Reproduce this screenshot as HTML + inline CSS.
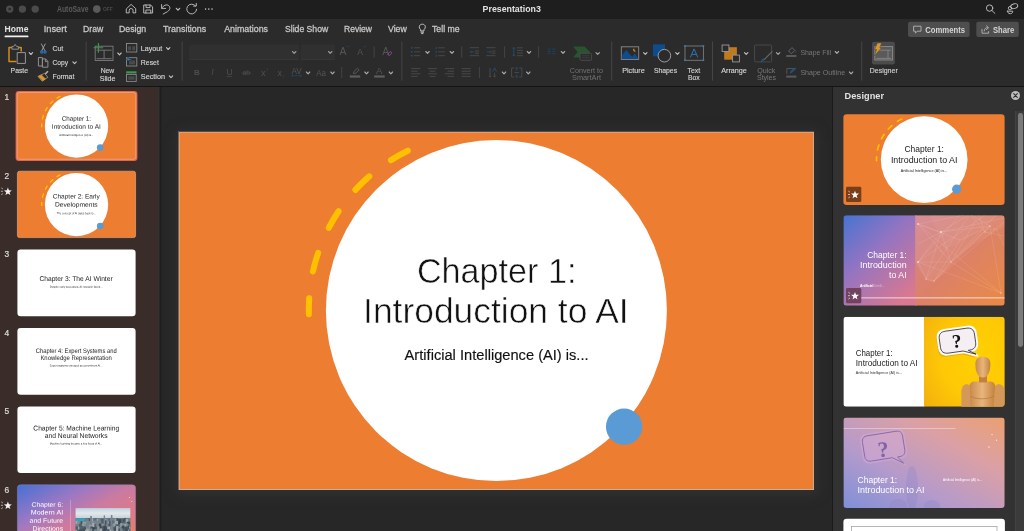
<!DOCTYPE html>
<html lang="en">
<head>
<meta charset="utf-8">
<title>Presentation3</title>
<style>
*{box-sizing:border-box;margin:0;padding:0}
html,body{width:1024px;height:531px;overflow:hidden;background:#282828}
body{position:relative;font-family:"Liberation Sans",sans-serif;color:#d6d6d6}
#titlebar{position:absolute;left:0;top:0;width:1024px;height:19px;background:#1e1e1e}
#ribbon{position:absolute;left:0;top:19px;width:1024px;height:67px;background:#2b2b2b}
#ribline{position:absolute;left:0;top:85.5px;width:1024px;height:1.7px;background:#141414}
#left{position:absolute;left:0;top:87px;width:158px;height:444px;background:#392c29;overflow:hidden}
#leftdiv{position:absolute;left:158px;top:87px;width:4px;height:444px;z-index:2;background:linear-gradient(90deg,#333 0,#333 1px,#272727 1px,#272727 2px,#1e1e1e 2px,#1e1e1e 3px,#232323 3px,#232323 4px)}
#main{position:absolute;left:160px;top:87px;width:672px;height:444px;background:#272727;overflow:hidden}
#slideshadow{position:absolute;left:19px;top:45px;width:635px;height:358px;background:#ed7d31;box-shadow:1px 2px 11px 3px rgba(58,58,58,.55)}
#designer{position:absolute;left:832px;top:87px;width:192px;height:444px;background:#323232;overflow:hidden;border-left:1px solid #1a1a1a}
svg{position:absolute;overflow:visible}
svg text{white-space:pre}
svg{will-change:transform}
.thin text{stroke:#fff;stroke-width:.55px;paint-order:fill stroke}
#dscroll{position:absolute;left:1015.3px;top:110.8px;width:8.7px;height:421px;background:#3b3b3b;border-left:1px solid #434343}
#dthumb{position:absolute;left:1018.3px;top:112.6px;width:4.8px;height:234.4px;border-radius:2.4px;background:#7b7b7b}
.tiny{stroke:#222;stroke-width:.12px}
</style>
</head>
<body>

<div id="titlebar"></div>
<svg id="titlesvg" width="1024" height="40" viewBox="0 0 1024 40" style="left:0;top:0" font-family="Liberation Sans, sans-serif">
<!-- traffic lights (inactive) -->
<circle cx="9.7" cy="9.1" r="3.7" fill="#4b4b4b"/><circle cx="9.7" cy="9.1" r="1.3" fill="#2a2a2a"/>
<circle cx="22.4" cy="9.1" r="3.7" fill="#4b4b4b"/>
<circle cx="35.2" cy="9.1" r="3.7" fill="#4b4b4b"/>
<text x="57" y="12" font-size="8.2" font-weight="bold" fill="#5c5c5c" textLength="31.5" lengthAdjust="spacingAndGlyphs">AutoSave</text>
<circle cx="96.8" cy="9.1" r="3.8" fill="#5a5a5a"/>
<text x="103" y="11.2" font-size="5.6" font-weight="bold" fill="#4a4a4a" textLength="9.8" lengthAdjust="spacingAndGlyphs">OFF</text>
<g fill="none" stroke="#bdbdbd" stroke-width=".95" stroke-linecap="round" stroke-linejoin="round">
<!-- home -->
<path d="M126.6 8.6 L131.1 4.4 L135.7 8.6 V12.9 H133 V10.4 a1.9 1.9 0 0 0 -3.8 0 V12.9 H126.6 Z"/>
<!-- save -->
<path d="M144.1 5 H150.6 L152.6 7 V13 H144.1 Z M146 5 V7.6 H150 V5 M145.9 13 V10 H150.8 V13"/>
<!-- undo -->
<path d="M161.6 4.6 V8.4 H165.6 M161.9 8.2 C163.4 5.2 166.6 4 168.6 5.6 C170.6 7.3 170.2 9.8 167.6 11.6 L163.2 14"/>
<path d="M176.3 8.3 L178 10.1 L179.7 8.3" stroke-width="1.2"/>
<!-- redo -->
<path d="M195.4 5.8 A4.9 4.9 0 1 0 196.6 9.2 M193.6 6.1 H196.3 V3.4"/>
</g>
<g fill="#bdbdbd"><circle cx="205.6" cy="9.1" r=".8"/><circle cx="208.8" cy="9.1" r=".8"/><circle cx="212" cy="9.1" r=".8"/></g>
<text x="482.6" y="11.9" font-size="9.6" font-weight="bold" fill="#e2e2e2" textLength="58.2" lengthAdjust="spacingAndGlyphs">Presentation3</text>
<g fill="none" stroke="#bdbdbd" stroke-width=".95" stroke-linecap="round">
<circle cx="989.6" cy="8.1" r="3.2"/><path d="M992 10.6 L994.9 13.4"/>
<!-- coauthor -->
<ellipse cx="1014.2" cy="6.2" rx="3.6" ry="2.3" transform="rotate(-18 1014.2 6.2)"/>
<circle cx="1010" cy="8.2" r="1.7"/>
<path d="M1007.4 11.2 H1012.8 C1012.8 14.6 1007.4 14.6 1007.4 11.2 Z"/>
</g>
</svg>

<div id="ribbon"></div><div id="ribline"></div>
<svg id="tabsvg" width="1024" height="40" viewBox="0 0 1024 40" style="left:0;top:0" font-family="Liberation Sans, sans-serif" font-size="9.2" fill="#c8c8c8">
<g stroke="#c8c8c8" stroke-width=".28">
<text x="4.6" y="31.8" fill="#e2e2e2" stroke="none" font-weight="bold" textLength="23.8" lengthAdjust="spacingAndGlyphs">Home</text>
<text x="43.8" y="31.8" textLength="23" lengthAdjust="spacingAndGlyphs">Insert</text>
<text x="83" y="31.8" textLength="20.2" lengthAdjust="spacingAndGlyphs">Draw</text>
<text x="119" y="31.8" textLength="27.2" lengthAdjust="spacingAndGlyphs">Design</text>
<text x="163" y="31.8" textLength="43.2" lengthAdjust="spacingAndGlyphs">Transitions</text>
<text x="224.2" y="31.8" textLength="43.8" lengthAdjust="spacingAndGlyphs">Animations</text>
<text x="285" y="31.8" textLength="43.2" lengthAdjust="spacingAndGlyphs">Slide Show</text>
<text x="344" y="31.8" textLength="28" lengthAdjust="spacingAndGlyphs">Review</text>
<text x="388" y="31.8" textLength="18.8" lengthAdjust="spacingAndGlyphs">View</text>
<text x="432" y="31.8" textLength="27.6" lengthAdjust="spacingAndGlyphs">Tell me</text>
</g>
<rect x="4.5" y="35.5" width="24" height="1.8" rx=".9" fill="#efefef"/>
<!-- bulb -->
<g fill="none" stroke="#c6c6c6" stroke-width="1" stroke-linecap="round">
<path d="M420.6 30.6 V29.6 C418.4 27.8 419 24.2 422.3 24.2 C425.6 24.2 426.2 27.8 424 29.6 V30.6 Z M421 32.2 H423.6 M421.6 33.6 H423"/>
</g>
<!-- comments / share buttons -->
<rect x="908" y="21.8" width="61.6" height="15.2" rx="2" fill="#4e4e4e"/>
<rect x="976.3" y="21.8" width="42.5" height="15.2" rx="2" fill="#4e4e4e"/>
<g fill="none" stroke="#b4b4b4" stroke-width=".9" stroke-linejoin="round" stroke-linecap="round">
<path d="M914 26.2 H921 V31.2 H917.2 L915.4 33.2 V31.2 H914 Z"/>
<path d="M982 29.4 V33.2 H988.6 V31.6 M984.2 31 C984.4 28.6 985.8 27.6 987.4 27.6 M986.4 25.8 L988.6 27.7 L986.4 29.6"/>
</g>
<g fill="#d6d6d6" font-weight="bold" font-size="8.8">
<text x="925.2" y="32.6" textLength="39.8" lengthAdjust="spacingAndGlyphs">Comments</text>
<text x="993" y="32.6" textLength="21.2" lengthAdjust="spacingAndGlyphs">Share</text>
</g>
</svg>
<svg id="ribsvg" width="1024" height="90" viewBox="0 0 1024 90" style="left:0;top:0" font-family="Liberation Sans, sans-serif" font-size="8">
<defs>
<path id="chev" d="M-1.7 -.9 L0 .9 L1.7 -.9" fill="none" stroke-width="1.1" stroke-linecap="round" stroke-linejoin="round"/>
</defs>
<!-- group separators -->
<g fill="#454545">
<rect x="85.6" y="41.4" width="1" height="39.2"/><rect x="181.6" y="41.4" width="1" height="39.2"/>
<rect x="401.4" y="41.4" width="1" height="39.2"/><rect x="611.2" y="41.4" width="1" height="39.2"/>
<rect x="712" y="41.4" width="1" height="39.2"/><rect x="861.2" y="41.4" width="1" height="39.2"/>
</g>
<g fill="#444">
<rect x="373.6" y="46.4" width="1" height="11.2"/><rect x="341.2" y="67" width="1" height="11"/>
<rect x="461.2" y="46.4" width="1" height="11.2"/><rect x="504.1" y="46.4" width="1" height="11.2"/>
<rect x="538.1" y="46.4" width="1" height="11.2"/><rect x="478.9" y="67" width="1" height="11"/>
</g>

<!-- ===== Clipboard ===== -->
<g fill="none" stroke-linejoin="round">
<path d="M12 47.6 H9 V61.6 H16.4 M18.4 47.6 H21.2 V51.6" stroke="#d48a1c" stroke-width="1.5"/>
<path d="M11.9 49.2 V46.6 H13.6 L15.1 44.4 L16.7 46.6 H18.4 V49.2 Z" stroke="#9a9a9a" stroke-width=".9" fill="#2b2b2b"/>
<rect x="17.2" y="52.6" width="8.2" height="10.8" fill="#2b2b2b" stroke="#a2a2a2" stroke-width=".9"/>
</g>
<use href="#chev" x="30.9" y="53.6" stroke="#c4c4c4"/>
<!-- scissors -->
<g fill="none" stroke="#a8a8a8" stroke-width=".9" stroke-linecap="round">
<path d="M41.4 44 L44.8 50.6 M45.2 44 L41.8 50.6"/>
<circle cx="41.7" cy="52" r="1.1" stroke="#2a74b8" stroke-width="1.2"/><circle cx="45" cy="52" r="1.1" stroke="#2a74b8" stroke-width="1.2"/>
</g>
<!-- copy -->
<g fill="#2b2b2b" stroke="#9c9c9c" stroke-width=".9" stroke-linejoin="round">
<path d="M38.4 57.6 H42.4 V66 H38.4 Z"/>
<path d="M42.4 58.9 H45.6 L47.9 61.4 V67.2 H42.4 Z"/><path d="M45.4 59.2 V61.6 H47.6" fill="none"/>
</g>
<use href="#chev" x="74.6" y="62.8" stroke="#c4c4c4"/>
<!-- format painter -->
<g stroke-linejoin="round" stroke-linecap="round">
<path d="M38.5 76.3 L44.5 73.3 L47.9 77.2 L42.7 80.8 Z" fill="#2b2b2b" stroke="#a89a84" stroke-width=".8"/>
<path d="M38.5 76.3 L41.4 74.9 L45.4 79 L42.7 80.8 Z" fill="#d9962f" stroke="#dda040" stroke-width=".6"/>
<path d="M45.6 73.6 L47.6 71.6" fill="none" stroke="#a8a8a8" stroke-width="1.5"/>
</g>
<g fill="#d4d4d4" stroke="#d4d4d4" stroke-width=".15">
<text x="10.6" y="72.8" textLength="17.4" lengthAdjust="spacingAndGlyphs">Paste</text>
<text x="52.4" y="50.9" textLength="10.8" lengthAdjust="spacingAndGlyphs">Cut</text>
<text x="52.4" y="64.9" textLength="15.6" lengthAdjust="spacingAndGlyphs">Copy</text>
<text x="52.4" y="78.8" textLength="22" lengthAdjust="spacingAndGlyphs">Format</text>
</g>

<!-- ===== Slides ===== -->
<g fill="none" stroke="#7c7c7c" stroke-width=".9">
<rect x="95.2" y="46.2" width="17.8" height="14.3"/>
<path d="M96.6 50.2 H111.6 M104.1 50.2 V58.6 M96.6 58.7 H111.6"/>
</g>
<path d="M93.6 47.7 H103.2 M98.4 42.9 V52.8" stroke="#3a9a4c" stroke-width="1.1" fill="none"/>
<use href="#chev" x="119.5" y="53.9" stroke="#c4c4c4"/>
<!-- layout -->
<rect x="126.5" y="43.5" width="10.3" height="8.5" fill="none" stroke="#8a8a8a" stroke-width=".9"/>
<rect x="128.1" y="46.3" width="3" height="4" fill="#4a4a4a"/><rect x="132.2" y="46.3" width="3" height="4" fill="#4a4a4a"/>
<use href="#chev" x="168.2" y="48.6" stroke="#c4c4c4"/>
<!-- reset -->
<rect x="126.5" y="57.7" width="10.3" height="8.3" fill="none" stroke="#8a8a8a" stroke-width=".9"/>
<rect x="129" y="60.4" width="6" height="4" fill="#4a4a4a"/>
<path d="M126.4 59.4 L128.2 57 L128.8 58.6 C130.6 58.4 131.8 59.6 131.8 61.6 C131 60.2 130 59.9 129.2 60 L129.6 61.4 Z" fill="#2f7fc4" stroke="#2b2b2b" stroke-width=".5"/>
<!-- section -->
<rect x="126.2" y="71.3" width="10.3" height="2.1" fill="#3a9a4c"/>
<rect x="126.5" y="74.4" width="9.7" height="7" fill="none" stroke="#8a8a8a" stroke-width=".9"/>
<rect x="128.2" y="76.2" width="6.3" height="3.6" fill="#4a4a4a"/>
<use href="#chev" x="171" y="76.7" stroke="#c4c4c4"/>
<g fill="#d4d4d4" stroke="#d4d4d4" stroke-width=".15">
<text x="100.7" y="72.8" textLength="13.6" lengthAdjust="spacingAndGlyphs">New</text>
<text x="99.7" y="80.5" textLength="15.8" lengthAdjust="spacingAndGlyphs">Slide</text>
<text x="140.8" y="50.9" textLength="21.4" lengthAdjust="spacingAndGlyphs">Layout</text>
<text x="140.8" y="64.9" textLength="18.1" lengthAdjust="spacingAndGlyphs">Reset</text>
<text x="140.8" y="79" textLength="24.2" lengthAdjust="spacingAndGlyphs">Section</text>
</g>

<!-- ===== Font (disabled) ===== -->
<rect x="188.9" y="44.6" width="110" height="15.3" rx="1.5" fill="#303030"/><rect x="189.5" y="59.2" width="108.8" height=".7" fill="#3a3a3a"/>
<rect x="300.4" y="44.6" width="34.8" height="15.3" rx="1.5" fill="#303030"/><rect x="301" y="59.2" width="33.6" height=".7" fill="#3a3a3a"/>
<use href="#chev" x="294.2" y="52.4" stroke="#9a9a9a"/><use href="#chev" x="330.2" y="52.4" stroke="#9a9a9a"/>
<g fill="#555">
<text x="339.6" y="55" font-size="10.4">A</text><text x="357.2" y="55" font-size="8.6">A</text>
<text x="382.2" y="55" font-size="10.4">A</text>
<text x="194" y="75.1" font-size="8" font-weight="bold" fill="#4e4e4e">B</text>
<text x="211.2" y="75.1" font-size="8.6" font-style="italic" fill="#4e4e4e">I</text>
<text x="226.6" y="75.1" font-size="8.6" fill="#4e4e4e">U</text>
<text x="242.4" y="75.1" font-size="6.8" fill="#4e4e4e">ab</text>
<text x="261.2" y="75.6" font-size="8.6" fill="#505050">x</text>
<text x="277.5" y="75.6" font-size="8.6" fill="#505050">x</text>
<text x="291.4" y="73.6" font-size="8.6" textLength="10.2" lengthAdjust="spacingAndGlyphs">AV</text>
<text x="316.2" y="75.6" font-size="8.4" textLength="9.8" lengthAdjust="spacingAndGlyphs">Aa</text>
<text x="376.1" y="74.4" font-size="9.6">A</text>
</g>
<text x="265.8" y="70.6" font-size="4" fill="#1f4a70">2</text><text x="282.4" y="77.6" font-size="4" fill="#1f4a70">2</text>
<path d="M347.2 47 L348.4 45.8 L349.6 47 M363.4 46 L364.6 47.2 L365.8 46" fill="none" stroke="#1f4a70" stroke-width=".8"/>
<path d="M387.6 54.4 L390.2 51.4 L391.9 52.8 L389.3 55.8 Z" fill="none" stroke="#8a4a92" stroke-width=".9"/>
<path d="M226.7 76.6 H232 M241.6 73 H251" stroke="#4e4e4e" stroke-width=".7"/>
<path d="M291.6 75.7 H301.4 M293 74.6 L291.6 75.7 L293 76.8 M300 74.6 L301.4 75.7 L300 76.8" fill="none" stroke="#1f4a70" stroke-width=".7"/>
<use href="#chev" x="308.1" y="72.9" stroke="#aaa"/><use href="#chev" x="332.5" y="72.9" stroke="#aaa"/>
<!-- highlighter + font colour -->
<path d="M353.4 73.6 L354 71.4 L357.4 68.2 L359.2 69.8 L355.8 73.2 Z" fill="none" stroke="#5c5c5c" stroke-width=".9" stroke-linejoin="round"/>
<rect x="349.8" y="75.4" width="10.4" height="2.2" fill="#5e5e5e"/>
<rect x="374.2" y="75.4" width="10.5" height="2.2" fill="#5e5e5e"/>
<use href="#chev" x="366.5" y="72.9" stroke="#aaa"/><use href="#chev" x="390.9" y="72.9" stroke="#aaa"/>

<!-- ===== Paragraph (disabled) ===== -->
<g fill="#23527c"><circle cx="411.7" cy="47.8" r=".85"/><circle cx="411.7" cy="51.8" r=".85"/><circle cx="411.7" cy="55.7" r=".85"/>
<rect x="435.7" y="46.8" width=".9" height="2.2"/><rect x="435.7" y="50.7" width=".9" height="2.2"/><rect x="435.7" y="54.6" width=".9" height="2.2"/></g>
<g stroke="#4c4c4c" stroke-width=".9" fill="none">
<path d="M414 47.8 H420.3 M414 51.8 H420.3 M414 55.7 H420.3"/>
<path d="M438.2 47.8 H444.8 M438.2 51.8 H444.8 M438.2 55.7 H444.8"/>
<path d="M469.8 47.7 H479 M475 51 H479 M475 53.2 H479 M469.8 55.7 H479"/>
<path d="M486.3 47.7 H495.5 M491.5 51 H495.5 M491.5 53.2 H495.5 M486.3 55.7 H495.5"/>
<path d="M516.9 47.8 H522.9 M516.9 50.4 H522.9 M516.9 53 H522.9 M516.9 55.7 H522.9"/>
<path d="M411.2 68.6 H420.3 M411.2 71.2 H417.6 M411.2 73.8 H420.3 M411.2 76.4 H417.6"/>
<path d="M428 68.6 H437 M429.6 71.2 H435.4 M428 73.8 H437 M429.6 76.4 H435.4"/>
<path d="M444.8 68.6 H454 M447.6 71.2 H454 M444.8 73.8 H454 M447.6 76.4 H454"/>
<path d="M461.6 68.6 H470.7 M461.6 71.2 H470.7 M461.6 73.8 H470.7 M461.6 76.4 H470.7"/>
<path d="M490 67.8 V77 M488.9 75.8 L490 77.2 L491.1 75.8 M494.6 72.6 V77 M493.5 75.8 L494.6 77.2 L495.7 75.8"/>
<path d="M514.2 68 H511.6 V77 H514.2 M519.2 68 H521.8 V77 H519.2 M514.6 72.5 H518.8"/>
</g>
<g stroke="#23527c" stroke-width=".8" fill="none">
<path d="M470.4 52 H474 M471.6 50.8 L470.4 52 L471.6 53.2"/>
<path d="M487 52 H490.6 M489.4 50.8 L490.6 52 L489.4 53.2"/>
<path d="M513.8 47.6 V56 M512.6 48.8 L513.8 47.4 L515 48.8 M512.6 54.8 L513.8 56.2 L515 54.8"/>
<path d="M492.8 71.6 L494.6 67.8 L496.4 71.6"/>
<path d="M516.7 67.4 V70.6 M515.6 68.6 L516.7 67.3 L517.8 68.6 M516.7 74.4 V77.6 M515.6 76.4 L516.7 77.7 L517.8 76.4"/>
</g>
<g fill="#1f3f60"><rect x="547.6" y="48.7" width="3.2" height="1"/><rect x="547.6" y="51" width="3.2" height="1"/><rect x="547.6" y="53.3" width="3.2" height="1"/>
<rect x="552.3" y="48.7" width="3.2" height="1"/><rect x="552.3" y="51" width="3.2" height="1"/><rect x="552.3" y="53.3" width="3.2" height="1"/></g>
<use href="#chev" x="427.5" y="52.4" stroke="#aaa"/><use href="#chev" x="451.9" y="52.4" stroke="#aaa"/>
<use href="#chev" x="529" y="52.4" stroke="#aaa"/><use href="#chev" x="563" y="52.4" stroke="#aaa"/>
<use href="#chev" x="504" y="72.9" stroke="#aaa"/><use href="#chev" x="528.3" y="72.9" stroke="#aaa"/>
<!-- smartart -->
<path d="M573 46.4 H584.6 L590 52 L584.6 57.6 H573 L577.6 52 Z" fill="#28552f"/>
<rect x="580" y="53.3" width="11.6" height="7" rx="1" fill="#2b2b2b" stroke="#4e4e4e" stroke-width=".9"/>
<path d="M582 55.8 H589.6 M582 57.8 H589.6" stroke="#444" stroke-width=".7"/>
<use href="#chev" x="597.7" y="53.5" stroke="#aaa"/>
<g fill="#727272">
<text x="569.8" y="72.8" textLength="33.2" lengthAdjust="spacingAndGlyphs">Convert to</text>
<text x="572" y="80.4" textLength="29" lengthAdjust="spacingAndGlyphs">SmartArt</text>
</g>

<!-- ===== Insert ===== -->
<rect x="621.3" y="46.8" width="17.4" height="12.6" fill="#2b2b2b" stroke="#8c8c8c" stroke-width=".9"/>
<path d="M621.8 55.6 L626.3 50 L632.2 57 L634.6 53.6 L638.2 58 V58.9 H621.8 Z" fill="#0f4c8c"/>
<path d="M634.4 48.4 A1.6 1.6 0 1 0 636 51 A1.9 1.9 0 0 1 634.4 48.4 Z" fill="#d48a1c"/>
<use href="#chev" x="645.3" y="53.5" stroke="#c4c4c4"/>
<rect x="653" y="44.3" width="12" height="12" fill="#0f4c8c"/>
<circle cx="664.4" cy="55.7" r="6.3" fill="#2b2b2b" stroke="#a8a8a8" stroke-width=".9"/>
<use href="#chev" x="677.4" y="53.5" stroke="#c4c4c4"/>
<rect x="685" y="46" width="18.4" height="14.3" fill="none" stroke="#7c7c7c" stroke-width=".9"/>
<g fill="#2f7fc4"><rect x="684.1" y="45.1" width="1.7" height="1.7"/><rect x="702.5" y="45.1" width="1.7" height="1.7"/><rect x="684.1" y="59.4" width="1.7" height="1.7"/><rect x="702.5" y="59.4" width="1.7" height="1.7"/></g>
<path d="M690.4 57.4 L694.1 48.9 L697.8 57.4 M691.8 54.4 H696.4" fill="none" stroke="#2f74b8" stroke-width="1"/>
<g fill="#d4d4d4" stroke="#d4d4d4" stroke-width=".15">
<text x="622.2" y="72.8" textLength="22.5" lengthAdjust="spacingAndGlyphs">Picture</text>
<text x="653.9" y="72.8" textLength="23.2" lengthAdjust="spacingAndGlyphs">Shapes</text>
<text x="687.5" y="72.8" textLength="12.7" lengthAdjust="spacingAndGlyphs">Text</text>
<text x="687.9" y="80.4" textLength="11.8" lengthAdjust="spacingAndGlyphs">Box</text>
</g>

<!-- ===== Drawing ===== -->
<rect x="724.2" y="47.2" width="12.7" height="12.5" fill="#bf7a1c"/>
<rect x="722.1" y="45" width="6.8" height="6.5" fill="#2b2b2b" stroke="#9a9a9a" stroke-width=".9"/>
<rect x="732.6" y="55.1" width="6.8" height="6.8" fill="#2b2b2b" stroke="#9a9a9a" stroke-width=".9"/>
<use href="#chev" x="746.2" y="53.5" stroke="#c4c4c4"/>
<rect x="754.6" y="45" width="17" height="16.9" rx="1" fill="none" stroke="#4c4c4c" stroke-width=".9"/>
<path d="M772.4 51.4 L763.6 60.2" stroke="#6a6a6a" stroke-width="1.1" fill="none"/>
<path d="M764.4 59 C763.6 61.6 761.8 62.6 759.6 62.4 C761.2 61.4 761.4 59.6 762.8 58.2 Z" fill="#23527c"/>
<use href="#chev" x="778.1" y="53.5" stroke="#aaa"/>
<!-- shape fill / outline -->
<rect x="786.2" y="55" width="10.2" height="2" fill="#5a5a5a"/>
<path d="M788.6 51 L792 47.6 L794.8 50.4 L791.4 53.8 Z" fill="none" stroke="#6a6a6a" stroke-width=".9" stroke-linejoin="round"/>
<path d="M795.4 50.4 C796.2 51.6 796.4 52.4 795.6 52.8" stroke="#23527c" stroke-width=".9" fill="none"/>
<rect x="786.2" y="75.6" width="10.2" height="2" fill="#5a5a5a"/>
<path d="M796 68.6 H786.8 V74" fill="none" stroke="#5a5a5a" stroke-width=".9"/>
<path d="M789.6 73.6 L790.2 71.6 L794.4 67.6 L795.9 69 L791.6 73.1 Z" fill="#23527c"/>
<use href="#chev" x="836.9" y="52.4" stroke="#aaa"/><use href="#chev" x="851.1" y="72.9" stroke="#aaa"/>
<g fill="#d4d4d4" stroke="#d4d4d4" stroke-width=".15">
<text x="721.2" y="72.8" textLength="25.6" lengthAdjust="spacingAndGlyphs">Arrange</text>
</g>
<g fill="#787878">
<text x="757.2" y="72.8" textLength="18.2" lengthAdjust="spacingAndGlyphs">Quick</text>
<text x="757" y="80.4" textLength="19" lengthAdjust="spacingAndGlyphs">Styles</text>
<text x="800.4" y="54.7" textLength="30.8" lengthAdjust="spacingAndGlyphs">Shape Fill</text>
<text x="800.4" y="75.1" textLength="44.7" lengthAdjust="spacingAndGlyphs">Shape Outline</text>
</g>

<!-- ===== Designer ===== -->
<rect x="872" y="41.7" width="22.9" height="22.9" rx="2" fill="#4b4b4b"/>
<rect x="874.8" y="46.6" width="17.8" height="13.4" fill="#5a5a5a" stroke="#8c8c8c" stroke-width=".9"/>
<path d="M876.4 50.2 H891 M888 50.2 V58.4 M876.4 58.4 H891" stroke="#8c8c8c" stroke-width=".8" fill="none"/>
<path d="M877.4 43 H881.6 L879.8 47.6 H881.6 L874.4 56 L876.6 49.6 H874.6 Z" fill="#dc972c" stroke="#4b4b4b" stroke-width=".5"/>
<g fill="#d4d4d4" stroke="#d4d4d4" stroke-width=".15">
<text x="869.8" y="72.8" textLength="27.9" lengthAdjust="spacingAndGlyphs">Designer</text>
</g>
</svg>

<div id="left"></div><div id="leftdiv"></div>
<svg id="leftsvg" width="160" height="531" viewBox="0 0 160 531" style="left:0;top:0" font-family="Liberation Sans, sans-serif">
<defs><clipPath id="lclip"><rect x="0" y="87" width="157.5" height="444"/></clipPath><linearGradient id="g6" x1="0" y1="0" x2="1" y2="1"><stop offset="0" stop-color="#4570d6"/><stop offset=".3" stop-color="#9a78c4"/><stop offset=".5" stop-color="#cc7aa0"/><stop offset=".75" stop-color="#e27a80"/><stop offset="1" stop-color="#f58440"/></linearGradient><linearGradient id="sky" x1="0" y1="0" x2="0" y2="1"><stop offset="0" stop-color="#bcd2e2"/><stop offset=".5" stop-color="#e3e8ea"/><stop offset="1" stop-color="#c4d2d8"/></linearGradient></defs>
<g clip-path="url(#lclip)">
<text x="4.4" y="100.2" font-size="8.4" fill="#dadada" stroke="#dadada" stroke-width=".22">1</text>
<text x="4.4" y="178.79999999999998" font-size="8.4" fill="#dadada" stroke="#dadada" stroke-width=".22">2</text>
<text x="4.4" y="257.2" font-size="8.4" fill="#dadada" stroke="#dadada" stroke-width=".22">3</text>
<text x="4.4" y="335.8" font-size="8.4" fill="#dadada" stroke="#dadada" stroke-width=".22">4</text>
<text x="4.4" y="414.2" font-size="8.4" fill="#dadada" stroke="#dadada" stroke-width=".22">5</text>
<text x="4.4" y="492.8" font-size="8.4" fill="#dadada" stroke="#dadada" stroke-width=".22">6</text>
<polygon points="7.90,187.50 8.93,190.28 11.89,190.40 9.56,192.24 10.37,195.10 7.90,193.45 5.43,195.10 6.24,192.24 3.91,190.40 6.87,190.28" fill="#f2f2f2"/><g stroke="#f2f2f2" stroke-width=".8" stroke-linecap="round" opacity=".8" fill="none"><path d="M1.60 188.10 L2.60 188.80 M1.30 191.30 L2.50 191.30 M1.60 194.50 L2.60 193.80"/></g>
<polygon points="7.90,501.50 8.93,504.28 11.89,504.40 9.56,506.24 10.37,509.10 7.90,507.45 5.43,509.10 6.24,506.24 3.91,504.40 6.87,504.28" fill="#f2f2f2"/><g stroke="#f2f2f2" stroke-width=".8" stroke-linecap="round" opacity=".8" fill="none"><path d="M1.60 502.10 L2.60 502.80 M1.30 505.30 L2.50 505.30 M1.60 508.50 L2.60 507.80"/></g>
<rect x="15.6" y="90.9" width="121.8" height="70" rx="3.2" fill="#e2674f"/>
<rect x="17.2" y="92.5" width="118.6" height="66.8" rx="2" fill="#ed7d31" stroke="#f4b89a" stroke-width=".6"/>
<g transform="translate(17.5,92.8) scale(0.18553)">
<circle cx="318.15" cy="179.2" r="170.7" fill="#fff"/>
<path d="M229.42 19.13 A176.8 176.8 0 0 0 130.47 182.84" fill="none" stroke="#ffc000" stroke-width="7.2" stroke-linecap="round" stroke-dasharray="19.3 27.2"/>
<circle cx="446" cy="295.4" r="18.2" fill="#5b9bd5"/>
</g>
<g class="tt" transform="rotate(0.03)">
<text x="76.4" y="120.8" font-size="6.4" fill="#222" text-anchor="middle" textLength="29.2" lengthAdjust="spacingAndGlyphs">Chapter 1:</text>
<text x="76.4" y="128.7" font-size="6.4" fill="#222" text-anchor="middle" textLength="49" lengthAdjust="spacingAndGlyphs">Introduction to AI</text>
<text x="76.4" y="135.9" font-size="2.8" fill="#222" text-anchor="middle" textLength="34" lengthAdjust="spacingAndGlyphs">Artificial Intelligence (AI) is...</text>
</g>
<rect x="17.4" y="171.2" width="118.2" height="66.4" rx="2.2" fill="#ed7d31" stroke="#e9b694" stroke-width=".6"/>
<g transform="translate(17.5,171.3) scale(0.18553)">
<circle cx="318.15" cy="179.2" r="170.7" fill="#fff"/>
<path d="M229.42 19.13 A176.8 176.8 0 0 0 130.47 182.84" fill="none" stroke="#ffc000" stroke-width="7.2" stroke-linecap="round" stroke-dasharray="19.3 27.2"/>
<circle cx="446" cy="295.4" r="18.2" fill="#5b9bd5"/>
</g>
<g class="tt" transform="rotate(0.03)">
<text x="76.4" y="198.5" font-size="6.4" fill="#222" text-anchor="middle" textLength="47" lengthAdjust="spacingAndGlyphs">Chapter 2: Early</text>
<text x="76.4" y="206.6" font-size="6.4" fill="#222" text-anchor="middle" textLength="42.6" lengthAdjust="spacingAndGlyphs">Developments</text>
<text x="76.4" y="214.1" font-size="2.8" fill="#222" text-anchor="middle" textLength="39" lengthAdjust="spacingAndGlyphs">The concept of AI dates back to...</text>
</g>
<rect x="17.4" y="249.6" width="118.2" height="66.6" rx="3.3" fill="#fff"/>
<rect x="17.4" y="328.1" width="118.2" height="66.6" rx="3.3" fill="#fff"/>
<rect x="17.4" y="406.4" width="118.2" height="66.6" rx="3.3" fill="#fff"/>
<g class="tt" transform="rotate(0.03)">
<text x="76.2" y="280.9" font-size="7" fill="#222" text-anchor="middle" textLength="73.2" lengthAdjust="spacingAndGlyphs">Chapter 3: The AI Winter</text>
<text x="76.3" y="287.8" font-size="2.8" fill="#222" text-anchor="middle" textLength="52.6" lengthAdjust="spacingAndGlyphs">Despite early successes, AI research faced...</text>
<text x="76.4" y="352.6" font-size="6.6" fill="#222" text-anchor="middle" textLength="80.8" lengthAdjust="spacingAndGlyphs">Chapter 4: Expert Systems and</text>
<text x="76.3" y="360" font-size="6.6" fill="#222" text-anchor="middle" textLength="71.4" lengthAdjust="spacingAndGlyphs">Knowledge Representation</text>
<text x="76.3" y="366.4" font-size="2.8" fill="#222" text-anchor="middle" textLength="52.6" lengthAdjust="spacingAndGlyphs">Expert systems emerged as a prominent AI...</text>
<text x="76.5" y="430.4" font-size="7" fill="#222" text-anchor="middle" textLength="85.8" lengthAdjust="spacingAndGlyphs">Chapter 5: Machine Learning</text>
<text x="76.4" y="438" font-size="7" fill="#222" text-anchor="middle" textLength="62.8" lengthAdjust="spacingAndGlyphs">and Neural Networks</text>
<text x="76.3" y="444.4" font-size="2.8" fill="#222" text-anchor="middle" textLength="52.6" lengthAdjust="spacingAndGlyphs">Machine learning became a key focus of AI...</text>
</g>
<rect x="17.4" y="484.8" width="118.2" height="66.6" rx="3.3" fill="url(#g6)" stroke="#8f86b8" stroke-width=".5"/>
<rect x="70.4" y="500" width=".5" height="40" fill="#e8c8d8" opacity=".8"/>
<rect x="75.6" y="508.1" width="54.7" height="10.2" fill="url(#sky)"/>
<rect x="75.6" y="518" width="54.7" height="16" fill="#667682"/>
<path d="M75.6 518.2 H86 L84 521 L80 521.4 L75.6 523 Z" fill="#3f9fb6"/>
<rect x="87.5" y="518.6" width="3.1" height="5.5" fill="#44525d"/><rect x="90.6" y="519.0" width="1.4" height="3.3" fill="#909ba0"/><rect x="92.0" y="518.3" width="1.4" height="5.1" fill="#a2aaad"/><rect x="93.4" y="518.4" width="1.9" height="4.4" fill="#5e6e79"/><rect x="95.3" y="518.3" width="1.4" height="4.3" fill="#5e6e79"/><rect x="96.7" y="518.8" width="1.4" height="4.9" fill="#a2aaad"/><rect x="98.1" y="518.2" width="2.5" height="3.3" fill="#76848c"/><rect x="100.6" y="519.0" width="2.5" height="4.1" fill="#52606b"/><rect x="103.1" y="518.4" width="1.4" height="3.7" fill="#52606b"/><rect x="104.5" y="518.8" width="3.1" height="4.2" fill="#909ba0"/><rect x="107.6" y="518.1" width="2.5" height="4.0" fill="#5e6e79"/><rect x="110.1" y="517.8" width="3.1" height="5.0" fill="#76848c"/><rect x="113.2" y="518.9" width="1.4" height="3.2" fill="#838e95"/><rect x="114.6" y="518.3" width="1.9" height="4.8" fill="#909ba0"/><rect x="116.5" y="518.3" width="1.9" height="5.6" fill="#44525d"/><rect x="118.4" y="519.2" width="3.1" height="3.5" fill="#3c4852"/><rect x="121.5" y="519.2" width="1.4" height="3.8" fill="#5e6e79"/><rect x="122.9" y="519.2" width="1.4" height="3.7" fill="#3c4852"/><rect x="124.3" y="517.9" width="1.4" height="3.3" fill="#44525d"/><rect x="125.7" y="518.9" width="2.5" height="3.2" fill="#a2aaad"/><rect x="128.2" y="517.9" width="2.1" height="3.4" fill="#76848c"/><rect x="75.6" y="520.9" width="1.9" height="3.2" fill="#a2aaad"/><rect x="77.5" y="521.6" width="3.1" height="3.5" fill="#838e95"/><rect x="80.6" y="521.3" width="1.9" height="5.3" fill="#44525d"/><rect x="82.5" y="521.5" width="2.5" height="5.4" fill="#909ba0"/><rect x="85.0" y="521.4" width="1.9" height="5.0" fill="#909ba0"/><rect x="86.9" y="521.0" width="3.1" height="5.3" fill="#76848c"/><rect x="90.0" y="520.7" width="1.4" height="3.5" fill="#5e6e79"/><rect x="91.4" y="520.8" width="3.1" height="3.8" fill="#838e95"/><rect x="94.5" y="520.5" width="1.9" height="5.4" fill="#76848c"/><rect x="96.4" y="520.7" width="3.1" height="4.5" fill="#76848c"/><rect x="99.5" y="520.7" width="1.9" height="5.0" fill="#76848c"/><rect x="101.4" y="520.6" width="3.1" height="3.8" fill="#52606b"/><rect x="104.5" y="520.4" width="2.5" height="4.5" fill="#44525d"/><rect x="107.0" y="521.4" width="1.9" height="5.3" fill="#a2aaad"/><rect x="108.9" y="521.1" width="1.9" height="4.6" fill="#52606b"/><rect x="110.8" y="520.3" width="2.5" height="4.9" fill="#52606b"/><rect x="113.3" y="520.8" width="1.4" height="4.4" fill="#5e6e79"/><rect x="114.7" y="521.5" width="1.4" height="3.4" fill="#a2aaad"/><rect x="116.1" y="520.9" width="1.9" height="5.1" fill="#a2aaad"/><rect x="118.0" y="521.8" width="3.1" height="5.4" fill="#3c4852"/><rect x="121.1" y="521.3" width="1.4" height="5.3" fill="#52606b"/><rect x="122.5" y="521.3" width="3.1" height="4.1" fill="#52606b"/><rect x="125.6" y="521.9" width="1.4" height="3.4" fill="#76848c"/><rect x="127.0" y="521.8" width="3.1" height="4.9" fill="#3c4852"/><rect x="130.1" y="521.1" width="0.2" height="4.3" fill="#76848c"/><rect x="75.6" y="523.8" width="1.4" height="3.9" fill="#76848c"/><rect x="77.0" y="523.8" width="1.9" height="5.5" fill="#76848c"/><rect x="78.9" y="523.6" width="3.1" height="3.8" fill="#52606b"/><rect x="82.0" y="523.8" width="1.9" height="4.8" fill="#909ba0"/><rect x="83.9" y="523.8" width="2.5" height="4.8" fill="#838e95"/><rect x="86.4" y="523.3" width="1.9" height="4.0" fill="#5e6e79"/><rect x="88.3" y="524.4" width="3.1" height="5.1" fill="#909ba0"/><rect x="91.4" y="523.3" width="3.1" height="3.7" fill="#a2aaad"/><rect x="94.5" y="524.1" width="1.9" height="4.4" fill="#52606b"/><rect x="96.4" y="523.7" width="2.5" height="5.2" fill="#76848c"/><rect x="98.9" y="523.6" width="2.5" height="5.4" fill="#3c4852"/><rect x="101.4" y="523.5" width="3.1" height="4.8" fill="#838e95"/><rect x="104.5" y="524.1" width="1.4" height="3.9" fill="#52606b"/><rect x="105.9" y="524.0" width="2.5" height="4.6" fill="#5e6e79"/><rect x="108.4" y="523.7" width="1.4" height="4.7" fill="#3c4852"/><rect x="109.8" y="523.4" width="1.4" height="5.0" fill="#5e6e79"/><rect x="111.2" y="523.7" width="1.9" height="5.1" fill="#76848c"/><rect x="113.1" y="523.3" width="2.5" height="5.5" fill="#909ba0"/><rect x="115.6" y="524.2" width="3.1" height="3.8" fill="#52606b"/><rect x="118.7" y="524.2" width="1.4" height="3.6" fill="#5e6e79"/><rect x="120.1" y="523.1" width="1.9" height="4.1" fill="#909ba0"/><rect x="122.0" y="523.3" width="3.1" height="3.5" fill="#838e95"/><rect x="125.1" y="523.7" width="1.4" height="4.1" fill="#a2aaad"/><rect x="126.5" y="523.3" width="1.9" height="3.4" fill="#76848c"/><rect x="128.4" y="523.9" width="1.9" height="5.6" fill="#5e6e79"/><rect x="75.6" y="526.3" width="2.5" height="3.8" fill="#52606b"/><rect x="78.1" y="526.6" width="1.4" height="3.3" fill="#a2aaad"/><rect x="79.5" y="526.0" width="2.5" height="4.4" fill="#52606b"/><rect x="82.0" y="526.0" width="1.4" height="4.2" fill="#52606b"/><rect x="83.4" y="526.5" width="2.5" height="4.8" fill="#44525d"/><rect x="85.9" y="526.6" width="3.1" height="5.5" fill="#838e95"/><rect x="89.0" y="526.5" width="1.4" height="5.0" fill="#838e95"/><rect x="90.4" y="526.5" width="2.5" height="5.2" fill="#44525d"/><rect x="92.9" y="527.2" width="2.5" height="3.9" fill="#3c4852"/><rect x="95.4" y="527.2" width="1.9" height="3.9" fill="#44525d"/><rect x="97.3" y="526.4" width="2.5" height="4.6" fill="#909ba0"/><rect x="99.8" y="525.7" width="1.4" height="4.4" fill="#3c4852"/><rect x="101.2" y="526.6" width="1.4" height="4.4" fill="#3c4852"/><rect x="102.6" y="525.8" width="1.4" height="4.4" fill="#44525d"/><rect x="104.0" y="526.1" width="3.1" height="4.2" fill="#3c4852"/><rect x="107.1" y="526.4" width="3.1" height="4.4" fill="#a2aaad"/><rect x="110.2" y="526.0" width="3.1" height="4.5" fill="#76848c"/><rect x="113.3" y="526.8" width="1.4" height="5.4" fill="#44525d"/><rect x="114.7" y="526.1" width="1.4" height="3.3" fill="#44525d"/><rect x="116.1" y="526.1" width="2.5" height="4.0" fill="#a2aaad"/><rect x="118.6" y="527.1" width="3.1" height="3.5" fill="#76848c"/><rect x="121.7" y="525.7" width="2.5" height="4.9" fill="#3c4852"/><rect x="124.2" y="526.6" width="3.1" height="5.2" fill="#44525d"/><rect x="127.3" y="526.1" width="1.9" height="4.5" fill="#44525d"/><rect x="129.2" y="526.7" width="1.1" height="5.4" fill="#a2aaad"/><rect x="75.6" y="529.8" width="1.9" height="3.7" fill="#909ba0"/><rect x="77.5" y="529.6" width="1.9" height="5.3" fill="#44525d"/><rect x="79.4" y="529.7" width="2.5" height="4.1" fill="#3c4852"/><rect x="81.9" y="528.7" width="3.1" height="4.5" fill="#44525d"/><rect x="85.0" y="529.9" width="1.4" height="3.4" fill="#a2aaad"/><rect x="86.4" y="529.2" width="2.5" height="3.5" fill="#a2aaad"/><rect x="88.9" y="528.6" width="1.9" height="5.1" fill="#838e95"/><rect x="90.8" y="528.6" width="1.4" height="5.0" fill="#838e95"/><rect x="92.2" y="529.7" width="1.9" height="3.5" fill="#44525d"/><rect x="94.1" y="529.3" width="2.5" height="5.4" fill="#76848c"/><rect x="96.6" y="528.5" width="1.9" height="5.5" fill="#838e95"/><rect x="98.5" y="529.1" width="1.4" height="4.0" fill="#838e95"/><rect x="99.9" y="528.4" width="2.5" height="4.2" fill="#a2aaad"/><rect x="102.4" y="529.1" width="1.4" height="5.2" fill="#44525d"/><rect x="103.8" y="529.9" width="2.5" height="5.0" fill="#3c4852"/><rect x="106.3" y="528.9" width="1.9" height="3.4" fill="#52606b"/><rect x="108.2" y="529.3" width="1.4" height="5.1" fill="#3c4852"/><rect x="109.6" y="529.7" width="1.9" height="4.4" fill="#a2aaad"/><rect x="111.5" y="529.6" width="2.5" height="3.9" fill="#76848c"/><rect x="114.0" y="528.6" width="1.9" height="5.2" fill="#3c4852"/><rect x="115.9" y="529.6" width="2.5" height="5.3" fill="#a2aaad"/><rect x="118.4" y="528.5" width="1.9" height="4.2" fill="#44525d"/><rect x="120.3" y="528.4" width="2.5" height="3.9" fill="#76848c"/><rect x="122.8" y="528.8" width="2.5" height="5.6" fill="#52606b"/><rect x="125.3" y="529.3" width="2.5" height="4.0" fill="#3c4852"/><rect x="127.8" y="529.4" width="1.4" height="4.1" fill="#838e95"/><rect x="129.2" y="528.6" width="1.1" height="5.0" fill="#52606b"/><rect x="90.2" y="516" width="1.7" height="9" fill="#75858f"/><rect x="103.7" y="515.4" width="1.3" height="9" fill="#75858f"/><rect x="110.9" y="515" width="1.5" height="9" fill="#75858f"/><rect x="86.6" y="519" width="2.2" height="9" fill="#75858f"/><rect x="106.4" y="518.4" width="1.8" height="9" fill="#75858f"/>
<g fill="#fff" opacity=".8"><circle cx="129.4" cy="497.6" r=".5"/><circle cx="131.8" cy="501.6" r=".5"/></g>
<g class="tw" transform="rotate(0.03)">
<text x="63.4" y="506.7" font-size="6.4" fill="#fff" text-anchor="end" textLength="31.6" lengthAdjust="spacingAndGlyphs">Chapter 6:</text>
<text x="63.4" y="514.5" font-size="6.4" fill="#fff" text-anchor="end" textLength="32.4" lengthAdjust="spacingAndGlyphs">Modern AI</text>
<text x="63.4" y="522.7" font-size="6.4" fill="#fff" text-anchor="end" textLength="33.6" lengthAdjust="spacingAndGlyphs">and Future</text>
<text x="63.4" y="530.7" font-size="6.4" fill="#fff" text-anchor="end" textLength="30.6" lengthAdjust="spacingAndGlyphs">Directions</text>
</g>
</g></svg>
<div id="main"><div id="slideshadow"></div></div>
<svg id="mainsvg" width="1024" height="531" viewBox="0 0 1024 531" style="left:0;top:0" font-family="Liberation Sans, sans-serif">
<rect x="179" y="132" width="635" height="358" fill="#ed7d31"/>
<g shape-rendering="crispEdges"><rect x="178" y="131" width="636" height="1" fill="#4c5054"/><rect x="178" y="131" width="1" height="359" fill="#66676a"/><rect x="179" y="132" width="635" height="1" fill="#e89a6a"/><rect x="179" y="132" width="1" height="358" fill="#ee9862"/><rect x="813" y="132" width="1" height="358" fill="#c6aa96"/><rect x="179" y="489" width="635" height="1" fill="#c8b09f"/></g>
<g transform="translate(178.6,131.6) scale(0.99890)">
<circle cx="318.15" cy="179.2" r="170.7" fill="#fff"/>
<path d="M229.42 19.13 A176.8 176.8 0 0 0 130.47 182.84" fill="none" stroke="#ffc000" stroke-width="6.1" stroke-linecap="round" stroke-dasharray="19.3 27.2"/>
<circle cx="446" cy="295.4" r="18.2" fill="#5b9bd5"/>
</g>
<g class="thin">
<text x="416.9" y="283" font-size="34.3" fill="#111" textLength="159.6" lengthAdjust="spacingAndGlyphs">Chapter 1:</text>
<text x="363.1" y="322.6" font-size="34.3" fill="#111" textLength="265.6" lengthAdjust="spacingAndGlyphs">Introduction to AI</text>
</g>
<text x="404.6" y="360" font-size="15.4" fill="#111" textLength="184" lengthAdjust="spacingAndGlyphs" stroke="#111" stroke-width=".15">Artificial Intelligence (AI) is...</text>
</svg>
<div id="designer"></div><div id="dscroll"></div><div id="dthumb"></div>
<svg id="dsvg" width="1024" height="531" viewBox="0 0 1024 531" style="left:0;top:0" font-family="Liberation Sans, sans-serif">
<defs>
<clipPath id="dclip"><rect x="833" y="87" width="182" height="444"/></clipPath>
<clipPath id="c2"><rect x="843.4" y="215.2" width="161.2" height="90.5" rx="3.3"/></clipPath>
<clipPath id="c3"><rect x="843.4" y="316.8" width="161.2" height="89.9" rx="3.3"/></clipPath>
<clipPath id="c4"><rect x="843.4" y="417.5" width="161.2" height="90.5" rx="3.3"/></clipPath>
<linearGradient id="g2a" x1="0" y1="0" x2=".75" y2="1"><stop offset="0" stop-color="#4674d2"/><stop offset=".45" stop-color="#9374c2"/><stop offset="1" stop-color="#d97890"/></linearGradient>
<linearGradient id="g2b" x1="0" y1="0" x2="1" y2="1"><stop offset="0" stop-color="#d3868f"/><stop offset=".5" stop-color="#dc8168"/><stop offset="1" stop-color="#ea8a44"/></linearGradient>
<radialGradient id="g3" cx=".68" cy=".45" r=".85"><stop offset="0" stop-color="#ffd000"/><stop offset=".55" stop-color="#fec806"/><stop offset="1" stop-color="#f3b00e"/></radialGradient>
<linearGradient id="g4" x1="0" y1="1" x2="1" y2="0"><stop offset="0" stop-color="#7f90d8"/><stop offset=".35" stop-color="#b59acb"/><stop offset=".7" stop-color="#dca0a4"/><stop offset="1" stop-color="#eba070"/></linearGradient>
<linearGradient id="wood" x1="0" y1="0" x2="1" y2="0"><stop offset="0" stop-color="#c98a4a"/><stop offset=".5" stop-color="#e8b57c"/><stop offset="1" stop-color="#c4823e"/></linearGradient>
</defs>

<text x="844.6" y="99.1" font-size="9.3" fill="#e2e2e2" font-weight="bold" textLength="39.4" lengthAdjust="spacingAndGlyphs">Designer</text>
<circle cx="1015.5" cy="95.5" r="4.5" fill="#bdbdbd"/><path d="M1013.7 93.7 L1017.3 97.3 M1017.3 93.7 L1013.7 97.3" stroke="#2e2e2e" stroke-width="1.1" stroke-linecap="round"/>
<g clip-path="url(#dclip)">
<rect x="843.4" y="114.2" width="161.2" height="90.8" rx="3.3" fill="#ed7d31"/>
<g transform="translate(843.4,114.2) scale(0.25393)">
<circle cx="318.15" cy="179.2" r="170.7" fill="#fff"/>
<path d="M229.42 19.13 A176.8 176.8 0 0 0 130.47 182.84" fill="none" stroke="#ffc000" stroke-width="6.6" stroke-linecap="round" stroke-dasharray="19.3 27.2"/>
<circle cx="446" cy="295.4" r="18.2" fill="#5b9bd5"/>
</g>
<g class="tt">
<text x="924.2" y="152.4" font-size="8.7" fill="#222" text-anchor="middle" textLength="39.6" lengthAdjust="spacingAndGlyphs">Chapter 1:</text>
<text x="924.2" y="163" font-size="8.7" fill="#222" text-anchor="middle" textLength="66.6" lengthAdjust="spacingAndGlyphs">Introduction to AI</text>
<text x="924" y="172" font-size="3.6" fill="#222" text-anchor="middle" textLength="46.4" lengthAdjust="spacingAndGlyphs">Artificial Intelligence (AI) is...</text>
</g>
<rect x="846" y="186.8" width="15.3" height="15.3" rx="1.4" fill="#7a3f18"/>
<polygon points="855.00,190.70 856.03,193.48 858.99,193.60 856.66,195.44 857.47,198.30 855.00,196.65 852.53,198.30 853.34,195.44 851.01,193.60 853.97,193.48" fill="#fff"/><g stroke="#fff" stroke-width=".8" stroke-linecap="round" opacity=".8" fill="none"><path d="M848.70 191.30 L849.70 192.00 M848.40 194.50 L849.60 194.50 M848.70 197.70 L849.70 197.00"/></g>
<!-- card 2 -->
<g clip-path="url(#c2)">
<rect x="843.4" y="215.2" width="73" height="90.5" fill="url(#g2a)"/>
<rect x="915.3" y="215.2" width="89.6" height="90.5" fill="url(#g2b)"/>
<path d="M915 215 H1005 V226 L975 244 L952 262 L934 282 L926 280 L915 262 Z" fill="#fff" opacity=".07"/>
<path d="M930 215 H1000 L968 238 L945 250 Z" fill="#fff" opacity=".04"/>
<g stroke="#fff" stroke-width=".35" opacity=".3" fill="none">
<path d="M918 224 L941 232 L918 262 L926 279 L934 281 L951 262 L941 232 L970 214 L990 226 L1001 293 L951 262 L918 224 L970 214"/>
<path d="M918 262 L951 262 L990 226 L941 232 M926 279 L970 214 M934 281 L990 226 M918 224 L1001 293 M918 262 L1001 293 M951 262 L996 215"/>
<path d="M918 262 L960 215 M918 262 L985 215 M926 279 L941 232 M934 281 L1004 222 M941 232 L1004 218 M918 224 L960 240 L990 226 M960 240 L934 281 M975 222 L951 262 M918 244 L941 232"/>
<path d="M978 214 L985 232 L1004 236 M985 232 L990 226 M996 228 L1004 246 M970 214 L985 232"/>
</g>
<g fill="#fff" opacity=".6"><circle cx="918" cy="224" r=".9"/><circle cx="941" cy="232" r="1"/><circle cx="918" cy="262" r="1"/><circle cx="990" cy="226" r=".7"/><circle cx="1001" cy="293" r=".7"/><circle cx="926" cy="279" r=".6"/><circle cx="934" cy="281" r=".6"/><circle cx="951" cy="262" r=".6"/><circle cx="941" cy="251" r=".5"/><circle cx="985" cy="232" r=".6"/><circle cx="994" cy="229" r=".5"/></g>
<rect x="846" y="297.5" width="160" height=".8" fill="#fff" opacity=".9"/>
</g>
<g class="tw">
<text x="906.6" y="258" font-size="8.6" fill="#fff" text-anchor="end" textLength="39.4" lengthAdjust="spacingAndGlyphs">Chapter 1:</text>
<text x="906.6" y="268.2" font-size="8.6" fill="#fff" text-anchor="end" textLength="46.6" lengthAdjust="spacingAndGlyphs">Introduction</text>
<text x="906.6" y="278.4" font-size="8.6" fill="#fff" text-anchor="end" textLength="17.6" lengthAdjust="spacingAndGlyphs">to AI</text>
<text x="860" y="287" font-size="3" fill="#fff" font-weight="bold" textLength="13.4" lengthAdjust="spacingAndGlyphs">Artificial</text>
<text x="874.4" y="287" font-size="3" fill="#fff" opacity=".45" textLength="10" lengthAdjust="spacingAndGlyphs">Intelli...</text>
</g>
<rect x="846" y="288" width="15.3" height="15.3" rx="1.4" fill="#6e3f58" opacity=".93"/>
<polygon points="855.00,291.90 856.03,294.68 858.99,294.80 856.66,296.64 857.47,299.50 855.00,297.85 852.53,299.50 853.34,296.64 851.01,294.80 853.97,294.68" fill="#fff"/><g stroke="#fff" stroke-width=".8" stroke-linecap="round" opacity=".8" fill="none"><path d="M848.70 292.50 L849.70 293.20 M848.40 295.70 L849.60 295.70 M848.70 298.90 L849.70 298.20"/></g>
<!-- card 3 -->
<g clip-path="url(#c3)">
<rect x="843.4" y="316.8" width="81" height="89.9" fill="#fff"/>
<rect x="924" y="316.8" width="81" height="89.9" fill="url(#g3)"/>
<!-- mannequin -->
<path d="M961.4 407 V392 C961.4 386.6 964 384.2 966.6 384.2 C969.4 384.2 971.6 386.6 971.6 391 V407 Z" fill="#d49858"/>
<path d="M993.4 407 V391 C993.4 386.6 996 384.2 998.8 384.2 C1001.8 384.2 1004.6 386.6 1004.6 392 V407 Z" fill="#d49858"/>
<path d="M970.4 407 L969.6 386 C969.6 383 972 381.6 975 381.6 H989.6 C992.6 381.6 995 383 995 386 L993.6 407 Z" fill="url(#wood)"/>
<path d="M971 396.6 C977 399.6 988 399.6 993.8 396.2" stroke="#b5773a" stroke-width=".7" fill="none"/>
<rect x="979" y="375" width="8" height="7.4" fill="#c08042"/>
<path d="M975.4 364 C975.4 359 978.2 356.8 982.8 356.8 C987.6 356.8 990.4 359 990.4 364 C990.4 370.6 988.6 377.6 982.8 377.6 C977.2 377.6 975.4 370.6 975.4 364 Z" fill="url(#wood)"/>
<!-- bubble -->
<g transform="rotate(-8 957 341)">
<path d="M946 328.4 H969 C974 328.4 976.6 331 976.6 336 V345.4 C976.6 350.4 974 353 969 353 H967.6 L975.2 358.4 L962 353 H946 C941 353 938.4 350.4 938.4 345.4 V336 C938.4 331 941 328.4 946 328.4 Z" fill="#a87408" opacity=".28" transform="translate(-1.6 2.2)"/>
<path d="M946 328.4 H969 C974 328.4 976.6 331 976.6 336 V345.4 C976.6 350.4 974 353 969 353 H967.6 L975.2 358.4 L962 353 H946 C941 353 938.4 350.4 938.4 345.4 V336 C938.4 331 941 328.4 946 328.4 Z" fill="#fff" stroke="#fdfafb" stroke-width="2.2" stroke-linejoin="round"/>
<path transform="translate(957.5 341) scale(.93 .9) translate(-957.5 -341)" d="M946 328.4 H969 C974 328.4 976.6 331 976.6 336 V345.4 C976.6 350.4 974 353 969 353 H967.6 L975.2 358.4 L962 353 H946 C941 353 938.4 350.4 938.4 345.4 V336 C938.4 331 941 328.4 946 328.4 Z" fill="#f5eef2" stroke="#1c1c1c" stroke-width=".8" stroke-linejoin="round"/>
</g>
<text x="957" y="347.6" font-family="Liberation Serif, serif" font-size="19" font-weight="bold" fill="#111" text-anchor="middle" transform="rotate(-6 957 342)">?</text>
</g>
<g class="tt">
<text x="855.8" y="356" font-size="8.6" fill="#222" textLength="36.8" lengthAdjust="spacingAndGlyphs">Chapter 1:</text>
<text x="855.8" y="365.7" font-size="8.6" fill="#222" textLength="61.8" lengthAdjust="spacingAndGlyphs">Introduction to AI</text>
<text x="855.8" y="374" font-size="3.5" fill="#333" textLength="46.2" lengthAdjust="spacingAndGlyphs">Artificial Intelligence (AI) is...</text>
</g>
<!-- card 4 -->
<g clip-path="url(#c4)">
<rect x="843.4" y="417.5" width="161.5" height="90.5" fill="url(#g4)"/>
<rect x="843.4" y="428" width="112.2" height=".5" fill="#fff" opacity=".75"/>
<g fill="#fff" opacity=".85"><circle cx="992" cy="434.6" r=".7"/><circle cx="996.5" cy="440.2" r=".6"/><circle cx="989" cy="447" r=".7"/></g>
<g transform="translate(.6 2.2) rotate(-9 883 447)">
<path d="M868 429 H899 C903.4 429 906 431.6 906 436 V452 C906 456.4 903.4 459 899 459 H898 L904 467.6 L890 459 H868 C863.6 459 861 456.4 861 452 V436 C861 431.6 863.6 429 868 429 Z" fill="#d2a9d2" opacity=".6"/>
<path d="M869 431.2 H898 C901.8 431.2 903.8 433.2 903.8 437 V451 C903.8 454.8 901.8 456.8 898 456.8 H895.6 L900.6 464 L890.4 456.8 H869 C865.2 456.8 863.2 454.8 863.2 451 V437 C863.2 433.2 865.2 431.2 869 431.2 Z" fill="none" stroke="#7b62a8" stroke-width=".8"/>
</g>
<text x="883" y="456.8" font-family="Liberation Serif, serif" font-size="22" font-weight="bold" fill="#7a62a8" text-anchor="middle" transform="rotate(-6 882 447)" opacity=".95">?</text>
<g fill="#8f86c8" opacity=".35"><ellipse cx="912" cy="488" rx="6" ry="22"/><ellipse cx="898" cy="506" rx="9" ry="7"/><ellipse cx="932" cy="506" rx="8" ry="6"/></g>
</g>
<g class="tw">
<text x="857.6" y="483" font-size="8.6" fill="#fff" textLength="39.6" lengthAdjust="spacingAndGlyphs">Chapter 1:</text>
<text x="857.6" y="493.3" font-size="8.6" fill="#fff" textLength="66.8" lengthAdjust="spacingAndGlyphs">Introduction to AI</text>
<text x="943" y="481" font-size="3" fill="#fff" textLength="38.8" lengthAdjust="spacingAndGlyphs">Artificial Intelligence (AI) is...</text>
</g>
<!-- card 5 -->
<rect x="843.4" y="518.7" width="161.5" height="30" rx="3.3" fill="#fff"/>
<rect x="851.6" y="526.6" width="145.4" height="20" fill="none" stroke="#9a9a9a" stroke-width=".7"/>

</g></svg>
</body>
</html>
